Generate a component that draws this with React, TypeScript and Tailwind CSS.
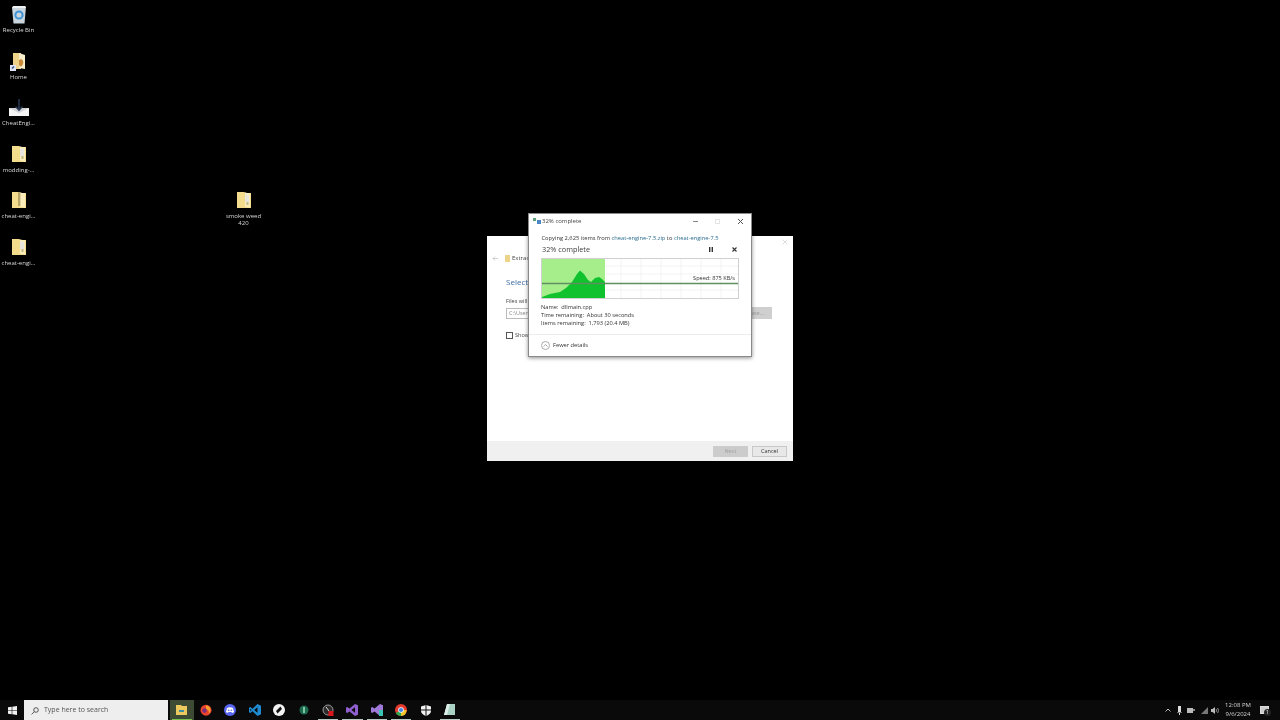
import type { ReactNode } from "react";

const font = "font-['Open_Sans','Liberation_Sans',sans-serif]";

function FolderIcon({ zip = false, docs = false }: { zip?: boolean; docs?: boolean }) {
  return (
    <svg className="mb-[2px]" width="16" height="18" viewBox="0 0 16 18">
      <path d="M1 1h7l2 1h5v15H1z" fill="#f3dc8c" />
      <path d="M9 1.500l5 1v14l-5-1z" fill="#fbeebc" />
      {docs && <path d="M9 3l4 1v8l-4-1z" fill="#e8e6dc" />}
      {zip ? (
        <path d="M7 1h2.400v14H7z" fill="#b8a66a" />
      ) : (
        <path d="M10.500 11h2v3h-2z" fill="#c4b888" />
      )}
    </svg>
  );
}

function RecycleBin() {
  return (
    <svg width="16" height="20" viewBox="0 0 16 20">
      <path d="M1 2.500l14-1-1.500 17h-11z" fill="#c9d4dc" />
      <path d="M2 1h12l1 2H1z" fill="#eef2f5" />
      <circle cx="8" cy="10" r="3.600" fill="none" stroke="#3b93d8" strokeWidth="2" />
    </svg>
  );
}

function HomeIcon() {
  return (
    <svg width="20" height="20" viewBox="0 0 20 20">
      <path d="M4 1h8v16H4z" fill="#edd28a" />
      <path d="M10 1l6 2v14l-6-1z" fill="#f8eecb" />
      <path d="M10 8c3-2 5 1 4 4s-3 3-4 1z" fill="#c98b3a" />
      <path d="M1 13h6v6H1z" fill="#dfe5f0" />
      <path d="M2.500 16l2-2 1 1-2 2z" fill="#34508c" />
    </svg>
  );
}

function InstallerIcon() {
  return (
    <svg width="22" height="20" viewBox="0 0 22 20">
      <path d="M1 10h20v8H1z" fill="#f4f4f4" />
      <path d="M1 10l10 5 10-5" fill="#cfd2d6" />
      <path d="M11 1v11M7.500 8.500L11 12l3.500-3.500" stroke="#27364f" strokeWidth="1.600" fill="none" />
    </svg>
  );
}

const desktopItems: { label: string; icon: ReactNode }[] = [
  { label: "Recycle Bin", icon: <RecycleBin /> },
  { label: "Home", icon: <HomeIcon /> },
  { label: "CheatEngi...", icon: <InstallerIcon /> },
  { label: "modding-...", icon: <FolderIcon docs /> },
  { label: "cheat-engi...", icon: <FolderIcon zip /> },
  { label: "cheat-engi...", icon: <FolderIcon docs /> },
];

function DesktopIcon({ label, icon }: { label: string; icon: ReactNode }) {
  return (
    <div className="flex h-[46.5px] w-[37px] flex-col items-center">
      <div className="flex h-[21px] items-end">{icon}</div>
      <span className="mt-[2px] text-center text-[6px] leading-[7px] text-[#d8d8d8]">{label}</span>
    </div>
  );
}

function Graph() {
  return (
    <div className="relative mt-[4px] -ml-px h-[41px] w-[198px] overflow-hidden border border-[#d0d0d0] bg-white">
      {/* grid lines */}
      <svg className="absolute inset-0" width="196" height="39">
        {[19, 39, 59, 79, 99, 119, 139, 159, 179].map((x) => (
          <path key={x} d="M0 0V39" transform={`translate(${x} 0)`} stroke="#f3f3f3" />
        ))}
        {[7, 15, 31].map((y) => (
          <path key={y} d={`M0 ${y}H196`} stroke="#f3f3f3" />
        ))}
        <path d="M0 0H63V39H0z" fill="#a6ee8c" />
        <path
          d="M0 38 L8 35 L18 33 L24 29 L30 23 L35 15 L38 11.500 L42 15 L46 21 L49 23 L53 19 L57 18 L60 20 L63 23 V39 H0z"
          fill="#11c22f"
        />
        <path d="M0 24.500H196" stroke="#5f8f5f" strokeWidth="1.300" />
      </svg>
      <span className="absolute right-[3px] top-[16px] text-[5.6px] leading-[7px] text-[#333]">
        Speed: 875 KB/s
      </span>
    </div>
  );
}

function CopyDialog() {
  return (
    <div className="absolute left-[528px] top-[213px] flex h-[144px] w-[224px] flex-col border border-[#8a8a8a] bg-white text-[5.7px] text-[#333] shadow-[0_1px_4px_rgba(0,0,0,0.45)]">
      <div className="flex h-[14px] items-center pl-[4px]">
        <svg width="8" height="6" viewBox="0 0 8 6">
          <path d="M0 0h3v3H0z" fill="#5aa27a" />
          <path d="M4 2h4v4H4z" fill="#4a87c4" />
        </svg>
        <span className="ml-[1px] text-[6px] text-[#444]">32% complete</span>
        <div className="ml-auto flex items-center text-[#777]">
          <span className="mr-[17px] h-px w-[5px] bg-[#888]" />
          <span className="mr-[17px] h-[5px] w-[5px] border border-[#e4e4e4]" />
          <svg className="mr-[7px]" width="7" height="7" viewBox="0 0 7 7">
            <path d="M1 1l5 5M6 1L1 6" stroke="#555" />
          </svg>
        </div>
      </div>
      <div className="flex flex-col px-[13px] pt-[7px]">
        <p className="-ml-[0.5px] text-[5.75px] leading-[7px]">
          Copying 2,625 items from <span className="text-[#2c6d8f]">cheat-engine-7.5.zip</span> to{" "}
          <span className="text-[#2c6d8f]">cheat-engine-7.5</span>
        </p>
        <div className="mt-[2px] flex h-[10px] items-center">
          <span className="text-[7.3px] leading-[10px] text-[#3f3f3f]">32% complete</span>
          <svg className="ml-auto mr-[19px]" width="4" height="5" viewBox="0 0 4 5">
            <path d="M0 0h1.400v5H0zM2.600 0H4v5H2.600z" fill="#333" />
          </svg>
          <svg className="mr-[1px]" width="5" height="5" viewBox="0 0 5 5">
            <path d="M.5.5l4 4M4.500.5l-4 4" stroke="#333" strokeWidth="1.100" />
          </svg>
        </div>
        <Graph />
        <div className="mt-[4px] -ml-px flex flex-col text-[5.7px] leading-[8px]">
          <span>Name:&nbsp; dllmain.cpp</span>
          <span>Time remaining:&nbsp; About 30 seconds</span>
          <span>Items remaining:&nbsp; 1,793 (20.4 MB)</span>
        </div>
      </div>
      <div className="mt-auto flex h-[22px] items-center border-t border-[#ececec] pl-[12px]">
        <span className="flex h-[9px] w-[9px] items-center justify-center rounded-full border border-[#aaa]">
          <svg width="5" height="3" viewBox="0 0 5 3">
            <path d="M.5 2.500l2-2 2 2" fill="none" stroke="#888" strokeWidth=".7" />
          </svg>
        </span>
        <span className="ml-[3px] text-[5.7px]">Fewer details</span>
      </div>
    </div>
  );
}

function ExtractWindow() {
  return (
    <div className="absolute left-[487px] top-[236px] flex h-[225px] w-[306px] flex-col bg-white text-[5.5px] text-[#444]">
      <div className="flex justify-end pr-[5px] pt-[3px]">
        <svg width="6" height="6" viewBox="0 0 6 6">
          <path d="M.5.500l5 5M5.500.500l-5 5" stroke="#dcdcdc" />
        </svg>
      </div>
      <div className="mt-[9px] flex items-center pl-[5px]">
        <svg width="6" height="5" viewBox="0 0 6 5">
          <path d="M3 .5L1 2.500l2 2M1 2.500h5" fill="none" stroke="#bbb" strokeWidth=".7" />
        </svg>
        <span className="ml-[7px] h-[7px] w-[5px] bg-[#ecd489]" />
        <span className="ml-[2px] text-[6px]">Extract</span>
      </div>
      <div className="mt-[13px] pl-[19px] text-[8px] leading-[11px] text-[#3d6da3]">Select</div>
      <div className="mt-[11px] pl-[19px] leading-[7px]">Files will</div>
      <div className="mt-[2px] flex items-center pl-[19px] pr-[21px]">
        <div className="flex h-[11px] w-[60px] items-center border border-[#bbb] pl-[2px] text-[#888]">
          C:\Users
        </div>
        <div className="ml-auto flex h-[12px] w-[42px] items-center justify-end bg-[#cfcfcf] pr-[8px] text-[#999]">
          Browse...
        </div>
      </div>
      <div className="mt-[12px] flex items-center pl-[19px]">
        <span className="h-[7px] w-[7px] border border-[#555]" />
        <span className="ml-[2px]">Show</span>
      </div>
      <div className="mt-auto flex h-[20px] items-center justify-end bg-[#f0f0f0] pr-[6px]">
        <div className="flex h-[11px] w-[35px] items-center justify-center bg-[#cccccc] text-[#a0a0a0]">Next</div>
        <div className="ml-[4px] flex h-[11px] w-[35px] items-center justify-center border border-[#c8c8c8] bg-[#e8e8e8] text-[#333]">
          Cancel
        </div>
      </div>
    </div>
  );
}

const taskbarIcons: { icon: ReactNode; running?: boolean }[] = [
  {
    running: true,
    icon: (
      <svg width="11" height="10" viewBox="0 0 11 10">
        <path d="M0 0h5l1 1h5v9H0z" fill="#ecc95e" />
        <path d="M3 5h5v2H3z" fill="#3f8f9c" />
      </svg>
    ),
  },
  {
    icon: (
      <svg width="12" height="12" viewBox="0 0 12 12">
        <circle cx="6" cy="6.200" r="5.500" fill="#e8442e" />
        <path d="M6 1.500a4.500 4.500 0 0 1 4.500 4.500c0 2-1 3-2 3.500 1-2 0-4-2.500-4z" fill="#f9a02b" />
        <circle cx="4.500" cy="6.500" r="2.200" fill="#7b2d7d" />
      </svg>
    ),
  },
  {
    icon: (
      <svg width="12" height="12" viewBox="0 0 12 12">
        <circle cx="6" cy="6" r="6" fill="#5865f2" />
        <path d="M3 4c2-1 4-1 6 0l1 4c-1 .7-1.500.8-2 .9L7.500 8h-3L4 8.900c-.5-.1-1-.2-2-.9z" fill="#fff" />
        <circle cx="4.700" cy="6.300" r=".8" fill="#5865f2" />
        <circle cx="7.300" cy="6.300" r=".8" fill="#5865f2" />
      </svg>
    ),
  },
  {
    icon: (
      <svg width="12" height="12" viewBox="0 0 12 12">
        <path d="M8.500 0L12 1.700v8.600L8.500 12 3.500 7.300 1.300 9 0 8.300V3.700L1.300 3l2.200 1.700z" fill="#1f8ad2" />
        <path d="M8.500 3.300L5.200 6l3.300 2.700zM1.300 4.700v2.600L2.600 6z" fill="#0a0a0a" />
      </svg>
    ),
  },
  {
    icon: (
      <svg width="12" height="12" viewBox="0 0 12 12">
        <circle cx="6" cy="6" r="6" fill="#f4f4f4" />
        <path d="M7.500 2.500L3 7l1.500 2.500L9 5z" fill="#111" />
      </svg>
    ),
  },
  {
    icon: (
      <svg width="10" height="10" viewBox="0 0 10 10">
        <circle cx="5" cy="5" r="4.500" fill="#1c6b50" />
        <path d="M4 2h2v6H4z" fill="#7fc4a0" />
      </svg>
    ),
  },
  {
    running: true,
    icon: (
      <svg width="12" height="12" viewBox="0 0 12 12">
        <circle cx="6" cy="6" r="5" fill="#2b2b2b" stroke="#9a9a9a" />
        <path d="M4 3l3 4" stroke="#ddd" />
        <path d="M6.500 7h5v5h-5z" fill="#d8141c" />
      </svg>
    ),
  },
  {
    running: true,
    icon: (
      <svg width="12" height="12" viewBox="0 0 12 12">
        <path d="M9 0l3 1.300v9.400L9 12 3.500 7.500 1.200 9 0 8.300V3.700L1.200 3l2.300 1.500z" fill="#8f5fd0" />
        <path d="M9 3.300L5.500 6 9 8.700z" fill="#0a0a0a" />
      </svg>
    ),
  },
  {
    running: true,
    icon: (
      <svg width="12" height="12" viewBox="0 0 12 12">
        <path d="M9 0l3 1.300v9.400L9 12 3.500 7.500 1.200 9 0 8.300V3.700L1.200 3l2.300 1.500z" fill="#a07ad8" />
        <path d="M8 6h4v6H8z" fill="#3cc3b0" />
      </svg>
    ),
  },
  {
    running: true,
    icon: (
      <svg width="12" height="12" viewBox="0 0 12 12">
        <circle cx="6" cy="6" r="6" fill="#e33b2e" />
        <path d="M6 6L.8 9A6 6 0 0 0 6 12a6 6 0 0 0 5.300-3z" fill="#2fa84f" />
        <path d="M6 6h5.700A6 6 0 0 1 6 12z" fill="#f7c52b" />
        <circle cx="6" cy="6" r="2.800" fill="#fff" />
        <circle cx="6" cy="6" r="2.100" fill="#3f83e8" />
      </svg>
    ),
  },
  {
    icon: (
      <svg width="10" height="11" viewBox="0 0 10 11">
        <path d="M5 0l5 1.500V6c0 2.500-2.500 4-5 5-2.500-1-5-2.500-5-5V1.500z" fill="#f2f2f2" />
        <path d="M4.500 0h1v11h-1zM0 4.500h10v1H0z" fill="#111" />
      </svg>
    ),
  },
  {
    running: true,
    icon: (
      <svg width="11" height="12" viewBox="0 0 11 12">
        <path d="M3 0h8v11H0z" fill="#a9d2c4" />
        <path d="M3 0h3L3 11H0z" fill="#dcefe8" />
      </svg>
    ),
  },
];

function SystemTray() {
  return (
    <div className="ml-auto flex h-full items-center text-[#c9c9c9]">
      <svg width="6" height="4" viewBox="0 0 6 4">
        <path d="M.5 3.500L3 1l2.500 2.500" fill="none" stroke="#bbb" />
      </svg>
      <svg className="ml-[6px]" width="5" height="9" viewBox="0 0 5 9">
        <path d="M1 0h3v6H1zM0 6.500h5V7H3v2H2V7H0z" fill="#ddd" />
      </svg>
      <svg className="ml-[5px]" width="8" height="6" viewBox="0 0 8 6">
        <path d="M0 1h6v5H0z" fill="#bbb" />
        <path d="M6 2h2v2H6z" fill="#888" />
      </svg>
      <svg className="ml-[6px]" width="7" height="7" viewBox="0 0 7 7">
        <path d="M0 7L7 0v7z" fill="#777" />
      </svg>
      <svg className="ml-[3px]" width="8" height="7" viewBox="0 0 8 7">
        <path d="M0 2h1.500L4 0v7L1.500 5H0z" fill="#bbb" />
        <path d="M5 2c.7 1 .7 2 0 3M6.500 1c1.200 1.500 1.200 3.500 0 5" fill="none" stroke="#999" />
      </svg>
      <div className="ml-[4px] flex w-[30px] flex-col items-center text-[6px] leading-[9px] text-[#d4d4d4]">
        <span>12:08 PM</span>
        <span>9/6/2024</span>
      </div>
      <div className="relative ml-[7px] mr-[11px] h-[8px] w-[9px] border border-[#ddd] bg-[#ccc]">
        <span className="absolute -bottom-[3px] -right-[3px] flex h-[7px] w-[7px] items-center justify-center rounded-full bg-[#222] text-[5px] leading-none text-white">
          1
        </span>
      </div>
    </div>
  );
}

function Taskbar() {
  return (
    <div className="flex h-[20px] w-full items-stretch bg-[#0a0a0a]">
      <div className="flex w-[24px] items-center justify-center">
        <svg width="9" height="9" viewBox="0 0 9 9">
          <path d="M0 1.300l3.700-.5v3.400H0zM4.300.7L9 0v4.200H4.300zM0 4.800h3.700v3.400L0 7.700zM4.300 4.800H9V9l-4.700-.7z" fill="#f2f2f2" />
        </svg>
      </div>
      <div className="flex w-[144px] items-center bg-[#eeeeee] pl-[7px] pt-[1px]">
        <svg width="8" height="8" viewBox="0 0 8 8">
          <circle cx="5" cy="3" r="2.300" fill="none" stroke="#333" strokeWidth=".8" />
          <path d="M3.300 4.700L.6 7.400" stroke="#333" strokeWidth=".8" />
        </svg>
        <span className="ml-[5px] text-[7px] text-[#555]">Type here to search</span>
      </div>
      <div className="ml-[1.5px] flex">
        {taskbarIcons.map((item, i) => (
          <div
            key={i}
            className={`relative flex w-[24.4px] items-center justify-center ${i === 0 ? "bg-[#3d4a34]" : ""}`}
          >
            {item.icon}
            {item.running && (
              <span
                className={`absolute bottom-0 left-[2px] right-[2px] h-px ${i === 0 ? "bg-[#7cc24e]" : "bg-[#b9c9c4]"}`}
              />
            )}
          </div>
        ))}
      </div>
      <SystemTray />
    </div>
  );
}

export default function App() {
  return (
    <div className={`relative flex h-[720px] w-[1280px] flex-col overflow-hidden bg-black blur-[0.35px] ${font}`}>
      <div className="flex flex-1 flex-col pt-[4px]">
        {desktopItems.map((item, i) => (
          <DesktopIcon key={i} label={item.label} icon={item.icon} />
        ))}
      </div>
      <div className="absolute left-[225px] top-[190px]">
        <DesktopIcon label="smoke weed 420" icon={<FolderIcon docs />} />
      </div>
      <ExtractWindow />
      <CopyDialog />
      <Taskbar />
    </div>
  );
}
